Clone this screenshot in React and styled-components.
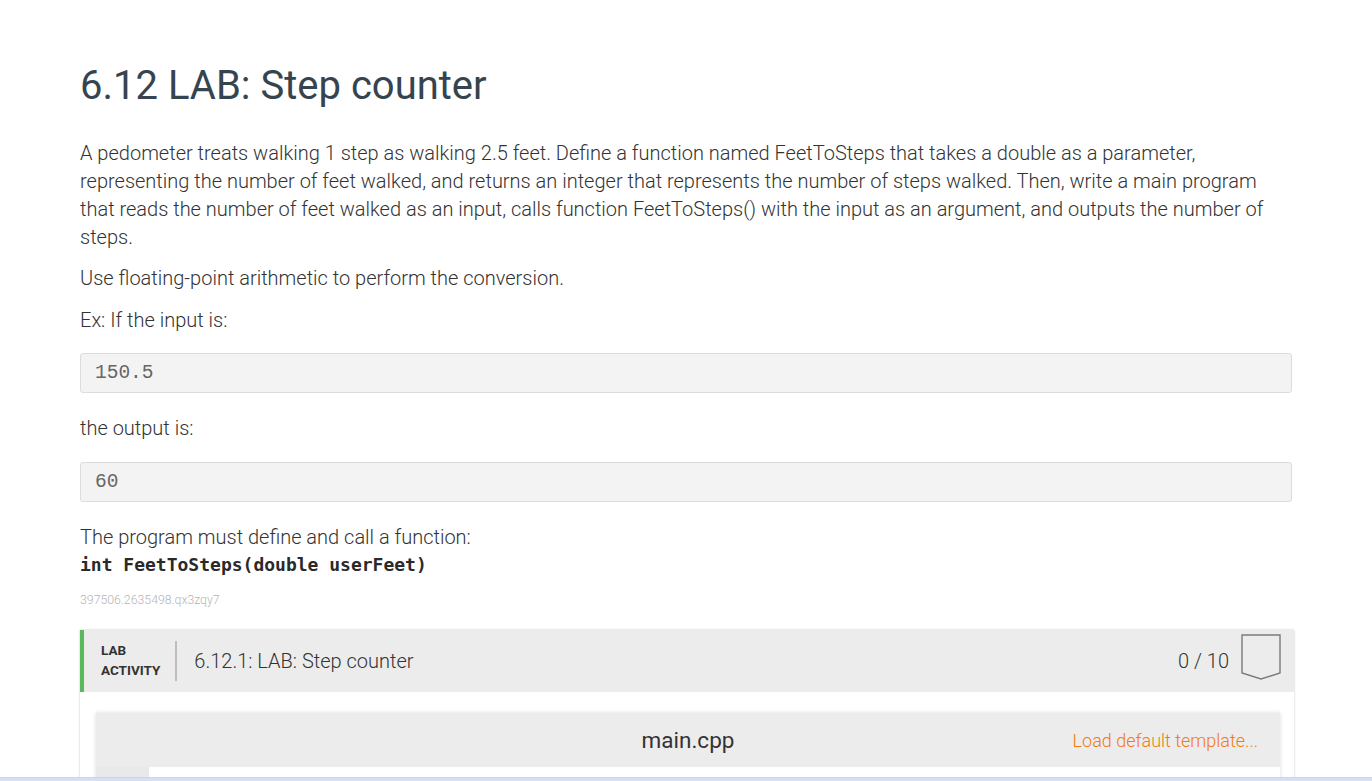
import React from 'react';
import styled, { createGlobalStyle } from 'styled-components';

const GlobalStyle = createGlobalStyle`
  html, body {
    margin: 0;
    padding: 0;
    background: #fff;
  }
  body {
    font-family: Roboto, "Open Sans", sans-serif;
    color: #333;
  }
`;

const Page = styled.div`
  padding: 62px 80px 0 80px;
  height: 781px;
  box-sizing: border-box;
  overflow: hidden;
`;

const Title = styled.h1`
  margin: 0 0 29px 0;
  font-size: 40px;
  line-height: 48px;
  font-weight: 400;
  color: #36444f;
`;

const Para = styled.p`
  margin: 0 0 ${({ gap }) => gap ?? 13}px 0;
  font-size: 20px;
  line-height: 28px;
  font-weight: 300;
  color: #333;
`;

const CodeBox = styled.pre`
  margin: 0 0 ${({ gap }) => gap ?? 21}px 0;
  height: 40px;
  box-sizing: border-box;
  padding: 0 14px;
  display: flex;
  align-items: center;
  background: #f3f3f3;
  border: 1px solid #dcdcdc;
  border-radius: 3px;
  font-family: "Liberation Mono", "Courier New", monospace;
  font-size: 19.5px;
  font-weight: 400;
  color: #666;
`;

const Signature = styled.code`
  display: block;
  font-family: "DejaVu Sans Mono", monospace;
  font-weight: 700;
  font-size: 18px;
  line-height: 28px;
  color: #2a2a2a;
`;

const Ref = styled.div`
  margin-top: 14px;
  font-size: 12.3px;
  line-height: 14px;
  font-weight: 300;
  color: #b5b5b5;
`;

const Lab = styled.section`
  margin-top: 23px;
  margin-right: -2px;
  box-shadow: 0 0 2px rgba(0, 0, 0, 0.25);
  background: #fff;
  padding-bottom: 20px;
`;

const LabHeader = styled.div`
  display: flex;
  align-items: center;
  height: 62px;
  background: #ececec;
  border-left: 4px solid #5cb85c;
  padding: 0 12px 0 17px;
`;

const LabTag = styled.div`
  font-size: 13.5px;
  line-height: 20px;
  font-weight: 700;
  color: #333;
  padding-right: 15px;
  margin-right: 17px;
  border-right: 2px solid #bdbdbd;
  height: 40px;
  box-sizing: border-box;
  padding-bottom: 3px;
  display: flex;
  flex-direction: column;
  justify-content: center;
`;

const LabTitle = styled.div`
  flex: 1;
  font-size: 20px;
  font-weight: 300;
  color: #333;
`;

const Score = styled.div`
  font-size: 20px;
  font-weight: 300;
  color: #333;
  margin-right: 11px;
`;

const BadgeWrap = styled.div`
  align-self: flex-start;
  margin-top: 3px;
  display: flex;
`;

const LabBody = styled.div`
  padding: 21px 14px 0 16px;
`;

const Editor = styled.div`
  box-shadow: 0 0 4px rgba(0, 0, 0, 0.15);
`;

const EditorHeader = styled.div`
  height: 54px;
  background: #ececec;
  display: flex;
  align-items: center;
  justify-content: center;
  position: relative;
`;

const FileName = styled.div`
  font-size: 22.5px;
  font-weight: 400;
  color: #333;
`;

const LoadLink = styled.a`
  position: absolute;
  right: 22px;
  font-size: 18px;
  font-weight: 300;
  color: #f37a12;
  cursor: pointer;
`;

const EditorBody = styled.div`
  display: flex;
  height: 60px;
`;

const Gutter = styled.div`
  width: 53px;
  background: #e9e9e9;
`;

const BottomStrip = styled.div`
  position: fixed;
  left: 0;
  right: 0;
  bottom: 0;
  height: 3px;
  background: #d6e0f4;
  border-top: 1px solid #c9d5ee;
`;

const Badge = () => (
  <BadgeWrap>
    <svg width="42" height="50" viewBox="0 0 42 50">
      <path d="M2 2 H40 V40 L21 46 L2 40 Z" fill="none" stroke="#7a7a7a" strokeWidth="1.4" />
    </svg>
  </BadgeWrap>
);

export default function App() {
  return (
    <Page>
      <GlobalStyle />
      <Title>6.12 LAB: Step counter</Title>
      <Para>
        A pedometer treats walking 1 step as walking 2.5 feet. Define a function named FeetToSteps that takes a double as a parameter,
        representing the number of feet walked, and returns an integer that represents the number of steps walked. Then, write a main program
        that reads the number of feet walked as an input, calls function FeetToSteps() with the input as an argument, and outputs the number of
        steps.
      </Para>
      <Para gap={14}>Use floating-point arithmetic to perform the conversion.</Para>
      <Para gap={19}>Ex: If the input is:</Para>
      <CodeBox>150.5</CodeBox>
      <Para gap={20}>the output is:</Para>
      <CodeBox>60</CodeBox>
      <Para gap={0}>The program must define and call a function:</Para>
      <Signature>int FeetToSteps(double userFeet)</Signature>
      <Ref>397506.2635498.qx3zqy7</Ref>
      <Lab>
        <LabHeader>
          <LabTag>
            <span>LAB</span>
            <span>ACTIVITY</span>
          </LabTag>
          <LabTitle>6.12.1: LAB: Step counter</LabTitle>
          <Score>0 / 10</Score>
          <Badge />
        </LabHeader>
        <LabBody>
          <Editor>
            <EditorHeader>
              <FileName>main.cpp</FileName>
              <LoadLink>Load default template...</LoadLink>
            </EditorHeader>
            <EditorBody>
              <Gutter />
            </EditorBody>
          </Editor>
        </LabBody>
      </Lab>
      <BottomStrip />
    </Page>
  );
}
